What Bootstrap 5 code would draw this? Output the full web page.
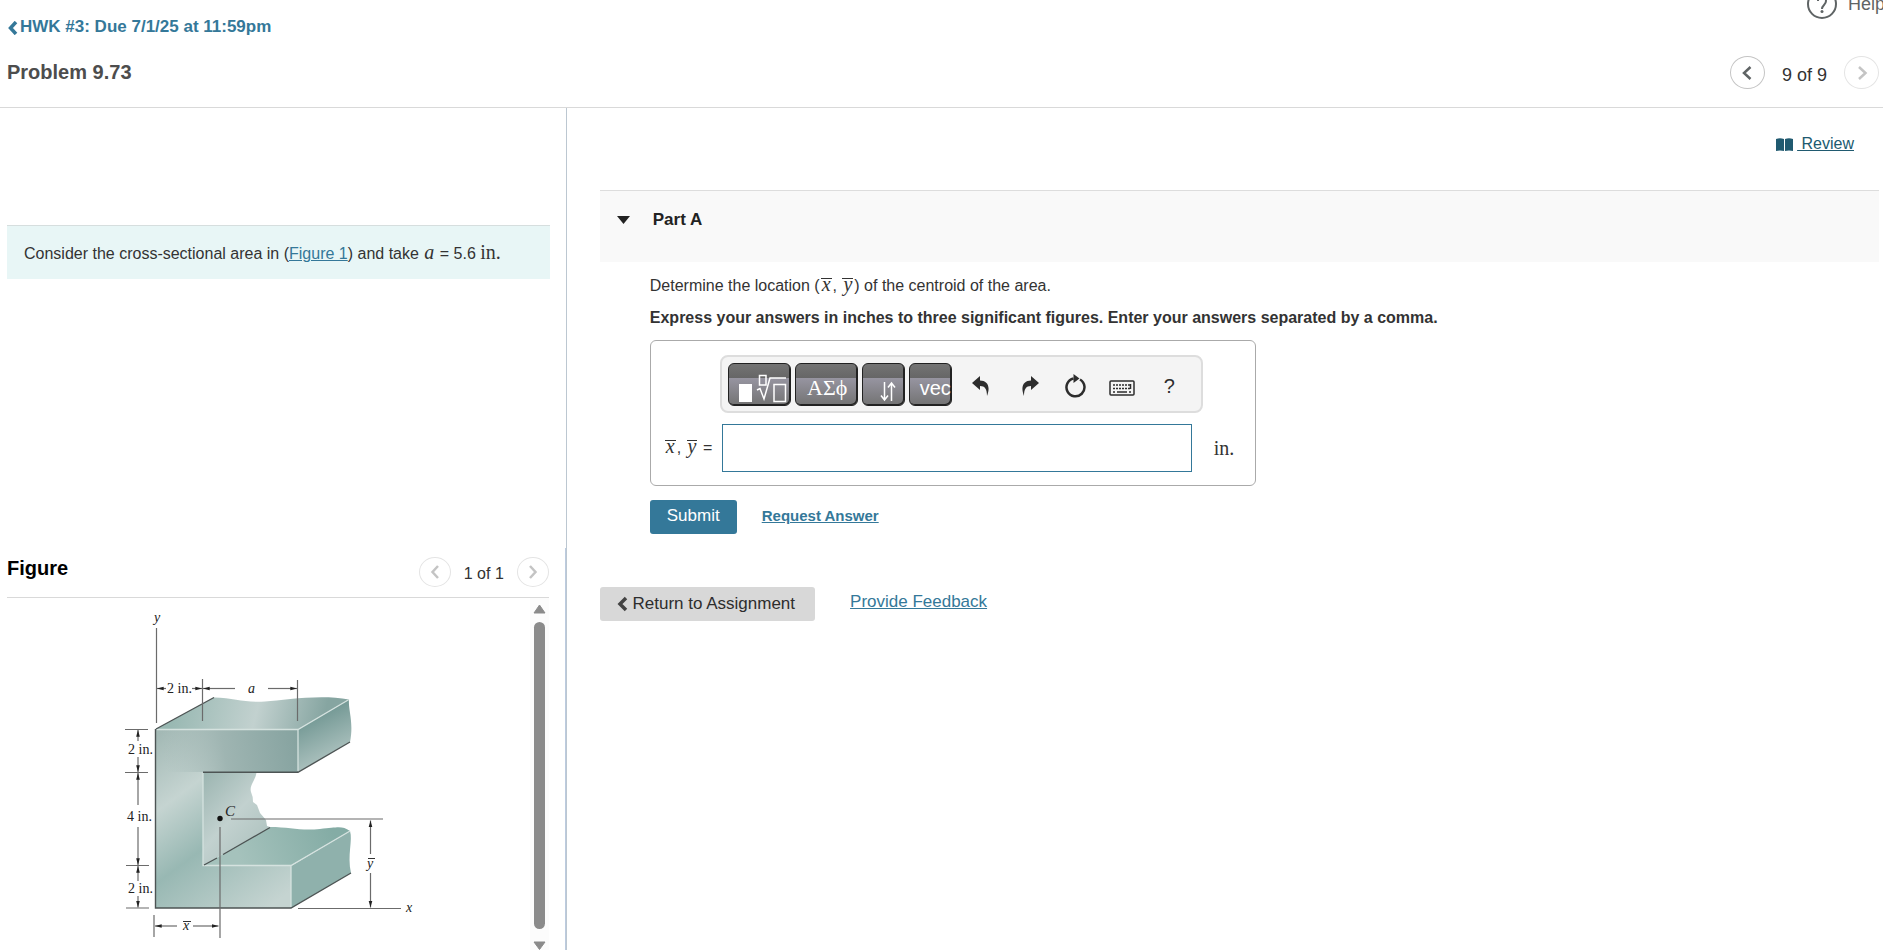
<!DOCTYPE html>
<html lang="en">
<head>
<meta charset="utf-8">
<meta name="viewport" content="width=device-width, initial-scale=1">
<title>Problem 9.73</title>
<link href="https://cdn.jsdelivr.net/npm/bootstrap@5.3.0/dist/css/bootstrap.min.css" rel="stylesheet">
<style>
  body { font-family: "Liberation Sans", Arial, sans-serif; font-size: 16px; line-height: 20px; color: #333; height: 100vh; overflow: hidden; }
  a { color: #347899; }
  main { min-height: 0; }
  .page-head { border-bottom: 1px solid #d9d9d9; padding: 0 4px 17px 7px; }
  .head-top { height: 44px; }
  .back-link { font-size: 17px; padding-top: 17px; gap: 2px; }
  .help-link { color: #5f6465; font-size: 18px; margin-top: -10px; margin-right: -6px; gap: 11px; }
  .head-row { height: 46px; padding-top: 11px; }
  .title { font-size: 20px; line-height: 24px; font-weight: 700; margin: 0; }
  .page-title { color: #4d4d4d; padding-bottom: 2px; }
  .fig-title { color: #000; }
  .round-btn { border: 1px solid #c4c4c4; border-radius: 50%; background: #fff; color: #5f6465; padding: 0; width: 35px; height: 33px; display: flex; align-items: center; justify-content: center; }
  .round-btn:disabled { border-color: #e4e4e4; color: #c4c4c4; }
  .round-sm { width: 32px; height: 30px; }
  .pager { font-size: 18px; gap: 17px; color: #333; }
  .pager-sm { font-size: 16px; gap: 13px; }
  .pager span { padding-top: 4px; }
  .left-pane { flex: 0 0 30.1%; border-right: 1px solid #bcc7d1; }
  .statement-pane { flex: 0 0 52.2%; padding: 117px 16px 0 7px; }
  .info { background: #e8f6f6; border-top: 1px solid #d6dede; padding: 16px 17px 15px; }
  .figure-pane { border-right: 1px solid #bccbdf; padding: 0 16px 0 7px; min-height: 0; }
  .fig-head { height: 50px; border-bottom: 1px solid #d9d9d9; padding-bottom: 8px; }
  .fig-view { min-height: 0; overflow: hidden; }
  .fig-view > svg { margin: 2px 0 0 103px; width: 320px; height: 350px; flex: none; }
  .track { width: 19px; background: #fcfcfc; padding: 6px 0 0; }
  .thumb { width: 11px; background: #8b8b8b; border-radius: 6px; }
  .right-pane { padding: 26px 4px 0 33px; }
  .review-link { color: #205a70; margin-right: 25px; }
  .part-head { background: #f9f9f9; border-top: 1px solid #ddd; margin-top: 36px; height: 72px; padding: 19px 17px; gap: 23px; color: #222; }
  .part-name { font-size: 17px; font-weight: 700; margin: 0; line-height: 20px; }
  .part-body { padding: 14px 0 0 50px; }
  .mi { font-family: "Liberation Serif", serif; font-style: italic; font-size: 20px; margin: 0 1px; }
  .mt { font-family: "Liberation Serif", serif; font-size: 20px; }
  .bar { display: inline-block; line-height: 10px; border-top: 1px solid #333; padding: 0 1px; }
  .answer-box { width: 606px; max-width: 100%; border: 1px solid #aaa; border-radius: 6px; padding: 14px 12px 13px; }
  .tools { background: #f4f4f4; border: 2px solid #ddd; border-radius: 8px; height: 58px; width: 483px; margin-left: 57px; padding: 0 6px; }
  .key { border: 1px solid #222; border-radius: 6px; color: #fff; padding: 0; height: 43px; box-shadow: inset -1px -1px 0 #222; background: linear-gradient(#747474, #666 34%, #9795a1 34%, #737373); overflow: hidden; display: flex; align-items: center; justify-content: flex-end; }
  .key-lg { width: 63px; }
  .key-sm { width: 43px; }
  .tool { border: 0; background: none; padding: 4px 0 0; color: #2d2d2d; width: 27px; height: 34px; display: flex; align-items: center; justify-content: center; }
  .tool svg { flex: none; }
  .answer-row { margin-top: 11px; }
  .answer-row label { width: 59px; padding-left: 1px; line-height: 20px; }
  .answer-input { border: 1px solid #347899; border-radius: 0; height: 48px; width: 470px; margin-right: 22px; padding: 0 8px; min-width: 0; }
  .action-row { padding-top: 14px; gap: 25px; }
  .flat-btn { border: 0; border-radius: 3px; height: 34px; font-size: 17px; line-height: 20px; padding: 0 17px 3px; }
  .submit-btn { background: #347899; color: #fff; }
  .return-btn { background: #d8d8d8; color: #2d2d2d; padding: 2px 20px 3px 17px; }
  .request-link { font-size: 15px; font-weight: 700; margin-bottom: 3px; }
  .exit-row { margin-top: 53px; gap: 35px; }
  svg text { font-family: "Liberation Serif", serif; }
</style>
</head>
<body class="d-flex flex-column">
<header class="page-head">
  <div class="head-top d-flex justify-content-between">
    <a class="back-link fw-bold text-decoration-none d-flex" href="#"><svg class="mt-1" width="11" height="14" viewBox="0 0 11 14" aria-hidden="true"><path d="M9 1 3.500 7 9 13" fill="none" stroke="currentColor" stroke-width="3.500"/></svg><span>HWK #3: Due 7/1/25 at 11:59pm</span></a>
    <a class="help-link d-flex text-decoration-none" href="#"><svg width="30" height="30" viewBox="0 0 30 30" aria-hidden="true"><circle cx="15" cy="14" r="14" fill="none" stroke="currentColor" stroke-width="2"/><path d="M11 11q0-4 4-4t4 4q0 2-2 4t-2 4" fill="none" stroke="currentColor" stroke-width="2"/><circle cx="15" cy="21.500" r="1.500" fill="currentColor"/></svg><span class="pt-1">Help</span></a>
  </div>
  <div class="head-row d-flex justify-content-between align-items-center">
    <h1 class="title page-title">Problem 9.73</h1>
    <nav class="pager d-flex align-items-center" aria-label="Problems">
      <button class="round-btn" type="button" aria-label="Previous problem"><svg width="12" height="16" viewBox="0 0 12 16"><path d="M9.500 2 3 8l6.500 6" fill="none" stroke="currentColor" stroke-width="2.500"/></svg></button>
      <span>9 of 9</span>
      <button class="round-btn" type="button" aria-label="Next problem" disabled><svg width="12" height="16" viewBox="0 0 12 16"><path d="M3 2l6.500 6L3 14" fill="none" stroke="currentColor" stroke-width="2.500"/></svg></button>
    </nav>
  </div>
</header>
<main class="d-flex flex-grow-1">
  <div class="left-pane d-flex flex-column">
    <section class="statement-pane">
      <div class="info">Consider the cross-sectional area in (<a href="#figure">Figure 1</a>) and take <span class="mi">a</span> = 5.6 <span class="mt">in.</span></div>
    </section>
    <section class="figure-pane flex-grow-1 d-flex flex-column" id="figure">
      <div class="fig-head d-flex justify-content-between align-items-center flex-shrink-0">
        <h2 class="title fig-title">Figure</h2>
        <nav class="pager pager-sm d-flex align-items-center pt-2" aria-label="Figures">
          <button class="round-btn round-sm" type="button" aria-label="Previous figure" disabled><svg width="12" height="16" viewBox="0 0 12 16"><path d="M9 2 3.500 8l5.500 6" fill="none" stroke="currentColor" stroke-width="2.500"/></svg></button>
          <span>1 of 1</span>
          <button class="round-btn round-sm" type="button" aria-label="Next figure" disabled><svg width="12" height="16" viewBox="0 0 12 16"><path d="M3 2l5.500 6L3 14" fill="none" stroke="currentColor" stroke-width="2.500"/></svg></button>
        </nav>
      </div>
      <div class="fig-view d-flex flex-grow-1 justify-content-between">
        <svg viewBox="110 600 320 350" role="img" aria-label="C-shaped cross-section with centroid C">
          <defs>
            <linearGradient id="front" gradientUnits="userSpaceOnUse" x1="150" y1="740" x2="272" y2="905"><stop offset="0" stop-color="#a3b9b5"/><stop offset=".3" stop-color="#c5d4d1"/><stop offset=".58" stop-color="#98b8b3"/><stop offset="1" stop-color="#c5d4d1"/></linearGradient>
            <linearGradient id="flange" gradientUnits="userSpaceOnUse" x1="165" y1="766" x2="298" y2="742"><stop offset="0" stop-color="#a9bdba" stop-opacity="0"/><stop offset=".45" stop-color="#9fb5b2"/><stop offset="1" stop-color="#86a3a0"/></linearGradient>
            <linearGradient id="top" gradientUnits="userSpaceOnUse" x1="175" y1="700" x2="320" y2="735"><stop offset="0" stop-color="#98b8b2"/><stop offset=".55" stop-color="#c2d1cf"/><stop offset="1" stop-color="#86a5a1"/></linearGradient>
            <linearGradient id="side" gradientUnits="userSpaceOnUse" x1="310" y1="715" x2="335" y2="765"><stop offset="0" stop-color="#709692"/><stop offset="1" stop-color="#b5c8c5"/></linearGradient>
            <linearGradient id="web" gradientUnits="userSpaceOnUse" x1="205" y1="775" x2="265" y2="830"><stop offset="0" stop-color="#9db6b2"/><stop offset=".6" stop-color="#c2d1cf"/><stop offset="1" stop-color="#b3c6c3"/></linearGradient>
            <linearGradient id="low" gradientUnits="userSpaceOnUse" x1="240" y1="860" x2="330" y2="825"><stop offset="0" stop-color="#a5c2bc"/><stop offset="1" stop-color="#84aca5"/></linearGradient>
            <marker id="tip" viewBox="0 0 8 6" refX="8" refY="3" markerWidth="7" markerHeight="5" markerUnits="userSpaceOnUse" orient="auto-start-reverse"><path d="M0 .8 8 3 0 5.200z" fill="#222"/></marker>
          </defs>
          <path d="M203 772H256.500C256 780 249 785 251 792Q253 796 253 802L257 805 260 813 266 820 267 826 270 827 203 865.500z" fill="url(#web)"/>
          <path d="M203 865.500 270 827C290 827 300 831 320 829S342 826 350 831L291 865.500z" fill="url(#low)"/>
          <path d="M291 866 350 831C353 840 347 855 351 873L291 908z" fill="#8fb1ac"/>
          <path d="M156 729 214 697.500C235 698 245 703 265 701.500S320 694 349 699.500L298 729.500z" fill="url(#top)"/>
          <path d="M298 729.500 349 699.500C348 710 354 722 350 742L298 772z" fill="url(#side)"/>
          <path d="M155.500 729.500H298V772H203V865.500H291V908H155.500z" fill="url(#front)"/>
          <path d="M156 729.500H298V772H156z" fill="url(#flange)"/>
          <path d="M157 729.500H298L349 699.500M298 729.500V771M203 773V865.500H291L350 831M291 865.500V907" fill="none" stroke="#d5e2df" stroke-width="1.300"/>
          <path d="M156 729 214 697.500M155.500 729V908H291L351 873M203 772.300H298L350 742M204 865 217 858M223 854.500 270 827.500" fill="none" stroke="#4d5454" stroke-width="1.400"/>
          <g stroke="#6b6b6b" stroke-width="1.200" fill="none">
            <path d="M156.500 628V723M202.500 679V721M297.500 680V721M125 729.500H148M125 772.500H148M126 865.500H149M126 908H149M220 827V938M231 819H383M298 908.500H401M154 915V937"/>
            <g marker-end="url(#tip)">
              <path d="M166 688.500H157"/><path d="M192 688.500H202"/><path d="M235 688.500H203"/><path d="M268 688.500H297"/>
              <path d="M138 741V730"/><path d="M138 757V772"/><path d="M138 805V773"/><path d="M138 827V865"/><path d="M138 881V866"/><path d="M138 896V907.500"/>
              <path d="M177 926H155"/><path d="M193 926H218.500"/><path d="M370.500 854V820.500"/><path d="M370.500 873V907.500"/>
            </g>
          </g>
          <circle cx="220" cy="818.500" r="2.700" fill="#111"/>
          <g fill="#222" font-size="14">
            <text x="167" y="693">2 in.</text><text x="128" y="754">2 in.</text><text x="127" y="821">4 in.</text><text x="128" y="893">2 in.</text>
            <g font-style="italic"><text x="154" y="622">y</text><text x="248" y="693">a</text><text x="225" y="816" font-size="15">C</text><text x="183" y="930">x</text><text x="367" y="868">y</text><text x="406" y="912">x</text></g>
          </g>
          <path d="M183 921.500H191M368 858.500H375" stroke="#333"/>
        </svg>
        <div class="track d-flex flex-column align-items-center" aria-hidden="true">
          <svg class="flex-shrink-0" width="13" height="10" viewBox="0 0 13 10"><path d="M6.500 1 12 9H1z" fill="#8b8b8b" stroke="#8b8b8b" stroke-linejoin="round"/></svg>
          <div class="thumb flex-grow-1 my-2"></div>
          <svg class="flex-shrink-0 mt-1" width="13" height="9" viewBox="0 0 13 9"><path d="M1 1H12L6.500 8.500z" fill="#8b8b8b" stroke="#8b8b8b" stroke-linejoin="round"/></svg>
        </div>
      </div>
    </section>
  </div>
  <section class="right-pane flex-grow-1">
    <div class="d-flex justify-content-end">
      <a class="review-link" href="#"><svg class="me-1" width="17" height="14" viewBox="0 0 17 14" aria-hidden="true"><path d="M0 1Q4-.5 8 1V13Q4 12 0 13zM9 1Q13-.5 17 1V13Q13 12 9 13z" fill="currentColor"/></svg>&nbsp;Review</a>
    </div>
    <div class="part-head d-flex align-items-start">
      <svg class="mt-1" width="13" height="12" viewBox="0 0 13 12" aria-hidden="true"><path d="M0 2H13L6.500 10z" fill="currentColor"/></svg>
      <h2 class="part-name">Part A</h2>
    </div>
    <div class="part-body">
      <p class="mb-2 pb-1">Determine the location (<span class="mi bar">x</span>, <span class="mi bar">y</span>) of the centroid of the area.</p>
      <p class="fw-bold mb-2 pb-1">Express your answers in inches to three significant figures. Enter your answers separated by a comma.</p>
      <div class="answer-box">
        <div class="tools d-flex align-items-center">
          <button class="key key-lg" type="button" aria-label="Templates"><svg width="52" height="40" viewBox="0 0 52 40"><path d="M1 20H14V38H1z" fill="#fff"/><path d="M21.500 11.500H28V21H21.500zM19 26l3-1.500L26 35 32 14H48M36 20.500H47.500V37.500H36z" fill="none" stroke="#fff" stroke-width="1.500"/></svg></button>
          <button class="key key-lg ms-1" type="button" aria-label="Greek letters"><svg width="52" height="40" viewBox="0 0 52 40"><text x="2" y="31" font-size="22" fill="#fff">ΑΣϕ</text></svg></button>
          <button class="key key-sm ms-1" type="button" aria-label="Arrows"><svg width="26" height="40" viewBox="0 0 26 40"><path d="M6.500 18V36M3 31.500 6.500 36 10 31.500M13.500 37V19M10 23.500 13.500 19 17 23.500" fill="none" stroke="#fff" stroke-width="1.500"/></svg></button>
          <button class="key key-sm ms-1" type="button"><span class="title fw-normal pt-2">vec</span></button>
          <button class="tool ms-3" type="button" aria-label="Undo"><svg width="18" height="22" viewBox="0 0 18 22"><path d="M0 8 8 1V5.500C15 5.500 19 11 15 21 15 14 13 11 8 11V15z" fill="currentColor"/></svg></button>
          <button class="tool ms-4 pe-1" type="button" aria-label="Redo"><svg width="18" height="22" viewBox="0 0 18 22"><path d="M18 8 10 1V5.500C3 5.500-1 11 3 21 3 14 5 11 10 11V15z" fill="currentColor"/></svg></button>
          <button class="tool ms-3" type="button" aria-label="Reset"><svg width="22" height="24" viewBox="0 0 22 24"><path d="M16 5.500A9 9 0 1 1 9.500 4.500" fill="none" stroke="currentColor" stroke-width="2.500"/><path d="M9.500 0 15.500 4.500 9.500 9z" fill="currentColor"/></svg></button>
          <button class="tool ms-3 ps-2" type="button" aria-label="Keyboard shortcuts"><svg class="mt-1" width="26" height="16" viewBox="0 0 26 16"><rect x="1" y="1" width="24" height="14" rx="1" fill="none" stroke="currentColor" stroke-width="1.500"/><path d="M4 5H22M4 8.500H22" stroke="currentColor" stroke-width="1.500" stroke-dasharray="2 1"/><path d="M4 12H6M8 12H18M20 12H22M21.500 4V9" stroke="currentColor" stroke-width="1.500"/></svg></button>
          <button class="tool ms-4 title fw-normal" type="button" aria-label="Help with the editor">?</button>
        </div>
        <div class="answer-row d-flex align-items-center">
          <label class="flex-shrink-0" for="answer"><span class="mi bar">x</span>, <span class="mi bar">y</span> =</label>
          <input class="answer-input" id="answer" type="text">
          <span class="mt flex-shrink-0">in.</span>
        </div>
      </div>
      <div class="action-row d-flex align-items-center">
        <button class="flat-btn submit-btn" type="button">Submit</button>
        <a class="request-link" href="#">Request Answer</a>
      </div>
    </div>
    <div class="exit-row d-flex align-items-center">
      <button class="flat-btn return-btn" type="button"><svg width="11" height="16" viewBox="0 0 11 16" aria-hidden="true"><path d="M9 2 3 8l6 6" fill="none" stroke="#444" stroke-width="3.500"/></svg> Return to Assignment</button>
      <a class="part-name fw-normal pb-1" href="#">Provide Feedback</a>
    </div>
  </section>
</main>
<script src="https://cdn.jsdelivr.net/npm/bootstrap@5.3.0/dist/js/bootstrap.bundle.min.js"></script>
</body>
</html>
